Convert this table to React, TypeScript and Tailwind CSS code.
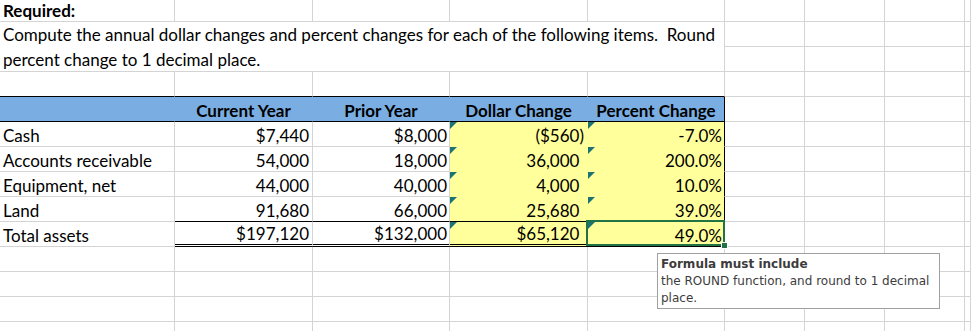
import React from "react";

const COLS = [
  "w-[175px]",
  "w-[138px]",
  "w-[137px]",
  "w-[138px]",
  "w-[137px]",
  "w-[80px]",
  "w-[80px]",
  "w-[80px]",
  "flex-1",
];

const items = [
  { label: "Cash", cur: "$7,440", prior: "$8,000", dollar: "($560)", pad: false, pct: "-7.0%" },
  { label: "Accounts receivable", cur: "54,000", prior: "18,000", dollar: "36,000", pad: true, pct: "200.0%" },
  { label: "Equipment, net", cur: "44,000", prior: "40,000", dollar: "4,000", pad: true, pct: "10.0%" },
  { label: "Land", cur: "91,680", prior: "66,000", dollar: "25,680", pad: true, pct: "39.0%" },
];

type CellProps = {
  w: string;
  r?: string;
  b?: string;
  className?: string;
  children?: React.ReactNode;
};

function Cell({
  w,
  r = "border-r-[#d4d4d4]",
  b = "border-b-[#d4d4d4]",
  className = "",
  children,
}: CellProps) {
  return (
    <div
      className={`${w} ${r} ${b} relative flex h-full shrink-0 items-end whitespace-nowrap border-r border-b ${className}`}
    >
      {children}
    </div>
  );
}

// green error flag in the top-left corner of a cell
function Flag() {
  return (
    <svg className="absolute left-0 top-0" width="7" height="7" viewBox="0 0 7 7">
      <polygon points="0,0 7,0 0,7" fill="#1b7473" />
    </svg>
  );
}

function EmptyCells({ from }: { from: number }) {
  return (
    <>
      {COLS.slice(from).map((w, i) => (
        <Cell key={i} w={w} />
      ))}
    </>
  );
}

export default function App() {
  return (
    <div className="h-[331px] w-[971px] overflow-hidden bg-white font-['Lato',sans-serif] text-[17px] leading-[20px] text-black">
      {/* row 1 */}
      <div className="flex h-[22px]">
        <Cell w={COLS[0]} className="pl-[3px] font-bold">
          Required:
        </Cell>
        <EmptyCells from={1} />
      </div>

      {/* rows 2-3, merged A:E */}
      <div className="flex h-[50px]">
        <div className="flex h-full w-[725px] shrink-0 flex-col border-r border-b border-r-[#d4d4d4] border-b-[#d4d4d4] pl-[3px] leading-[25px]">
          <div className="whitespace-nowrap">
            Compute the annual dollar changes and percent changes for each of the following items.&nbsp; Round
          </div>
          <div className="whitespace-nowrap">percent change to 1 decimal place.</div>
        </div>
        <div className="flex flex-1 flex-col">
          <div className="flex h-[25px]">
            <EmptyCells from={5} />
          </div>
          <div className="flex h-[25px]">
            <EmptyCells from={5} />
          </div>
        </div>
      </div>

      {/* row 4 */}
      <div className="flex h-[25px]">
        {COLS.slice(0, 5).map((w, i) => (
          <Cell key={i} w={w} b="border-b-black" />
        ))}
        <EmptyCells from={5} />
      </div>

      {/* header */}
      <div className="flex h-[25px] font-bold">
        <Cell w={COLS[0]} r="border-r-transparent" b="border-b-black" className="bg-[#7aaee3]" />
        {["Current Year", "Prior Year", "Dollar Change", "Percent Change"].map((h, i) => (
          <Cell
            key={h}
            w={COLS[i + 1]}
            r={i === 3 ? "border-r-black" : "border-r-transparent"}
            b="border-b-black"
            className="justify-center bg-[#7aaee3]"
          >
            {h}
          </Cell>
        ))}
        <EmptyCells from={5} />
      </div>

      {/* items */}
      {items.map((it, idx) => {
        const last = idx === items.length - 1;
        const line = last ? "border-b-black" : "border-b-[#d4d4d4]";
        return (
          <div key={it.label} className="flex h-[25px]">
            <Cell w={COLS[0]} className="pl-[3px]">
              {it.label}
            </Cell>
            <Cell w={COLS[1]} b={line} className="justify-end pr-[3px]">
              {it.cur}
            </Cell>
            <Cell w={COLS[2]} b={line} className="justify-end pr-[2px]">
              {it.prior}
            </Cell>
            <Cell
              w={COLS[3]}
              r="border-r-transparent"
              b={last ? "border-b-black" : "border-b-transparent"}
              className="justify-end bg-[#ffff9c] pr-[3px]"
            >
              <Flag />
              {it.dollar}
              {it.pad && <span className="invisible">)</span>}
            </Cell>
            <Cell
              w={COLS[4]}
              r="border-r-black"
              b={last ? "border-b-black" : "border-b-transparent"}
              className="justify-end bg-[#ffff9c] pr-[2px]"
            >
              <Flag />
              {it.pct}
            </Cell>
            <EmptyCells from={5} />
          </div>
        );
      })}

      {/* total */}
      <div className="flex h-[25px]">
        <Cell w={COLS[0]} className="pl-[3px]">
          Total assets
        </Cell>
        <Cell w={COLS[1]} b="border-b-black" className="justify-end border-b-[3px] border-double pr-[3px]">
          $197,120
        </Cell>
        <Cell w={COLS[2]} b="border-b-black" className="justify-end border-b-[3px] border-double pr-[2px]">
          $132,000
        </Cell>
        <Cell
          w={COLS[3]}
          r="border-r-transparent"
          b="border-b-black"
          className="justify-end border-b-[3px] border-double bg-[#ffff9c] pr-[3px]"
        >
          <Flag />
          $65,120
          <span className="invisible">)</span>
        </Cell>
        <Cell w={COLS[4]} r="border-r-black" b="border-b-black" className="z-10 justify-end bg-[#ffff9c] pr-[2px]">
          <Flag />
          49.0%
          {/* selected cell */}
          <div className="pointer-events-none absolute -left-[2px] -top-[2px] -right-[1px] bottom-0 border-2 border-[#217346]" />
          <div className="absolute left-[133px] top-[20px] h-[7px] w-[7px] border border-white bg-[#217346]" />
          {/* comment tooltip */}
          <div className="absolute left-[69px] top-[31px] h-[56px] w-[283px] whitespace-normal border border-[#a0a0a0] bg-white pl-[3px] pt-[2px] font-['DejaVu_Sans',sans-serif] text-[12px] leading-[17px] text-[#3c3c3c]">
            <div className="font-bold">Formula must include</div>
            <div>the ROUND function, and round to 1 decimal</div>
            <div>place.</div>
          </div>
        </Cell>
        <EmptyCells from={5} />
      </div>

      {/* blank rows */}
      {[0, 1, 2, 3].map((r) => (
        <div key={r} className="flex h-[25px]">
          <EmptyCells from={0} />
        </div>
      ))}
    </div>
  );
}
